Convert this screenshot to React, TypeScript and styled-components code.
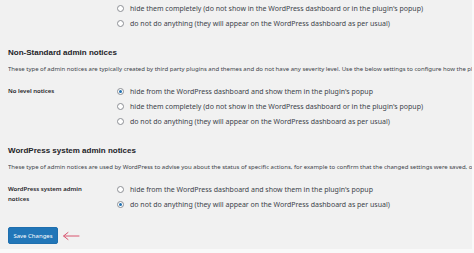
import React from "react";
import styled, { createGlobalStyle } from "styled-components";

const GlobalStyle = createGlobalStyle`
  html, body {
    margin: 0;
    padding: 0;
    background: #f9f9f9;
  }
  body {
    font-family: "Noto Sans", "Liberation Sans", Arial, sans-serif;
  }
`;

const Page = styled.div`
  width: 472px;
  height: 249px;
  overflow: hidden;
  background: #f1f1f1;
  padding: 0.5px 0 0 8px;
  box-sizing: border-box;
  color: #3c434a;
`;

const Heading = styled.h2`
  margin: 16.5px 0 0;
  font-family: "Liberation Sans", Arial, sans-serif;
  font-size: 8px;
  line-height: 12px;
  font-weight: 600;
  color: #1d2327;
  white-space: nowrap;
`;

const Description = styled.p`
  margin: 6px 0 0;
  font-size: 6px;
  line-height: 8px;
  white-space: nowrap;
  overflow: hidden;
  color: #3c434a;
`;

const Table = styled.div<{ $gap?: number }>`
  display: grid;
  grid-template-columns: 108.5px 1fr;
  margin-top: ${(p) => p.$gap ?? 0}px;
`;

const Label = styled.div`
  font-size: 6px;
  line-height: 10px;
  font-weight: 600;
  color: #1d2327;
  padding-top: 2.5px;
  width: 80px;
`;

const Options = styled.div`
  display: flex;
  flex-direction: column;
`;

const Option = styled.label`
  display: flex;
  align-items: center;
  height: 15px;
  font-size: 7px;
  color: #3c434a;
  white-space: nowrap;
`;

const Radio = styled.span<{ $checked?: boolean }>`
  width: 7px;
  height: 7px;
  box-sizing: border-box;
  border: 1px solid #8c8f94;
  border-radius: 50%;
  background: #fff;
  margin-right: 6.5px;
  display: flex;
  align-items: center;
  justify-content: center;
  flex-shrink: 0;
  &::after {
    content: "";
    display: ${(p) => (p.$checked ? "block" : "none")};
    width: 3px;
    height: 3px;
    border-radius: 50%;
    background: #2271b1;
  }
`;

const Actions = styled.div`
  display: flex;
  align-items: center;
  margin-top: 15.5px;
  gap: 4px;
`;

const SaveButton = styled.button`
  width: 50px;
  height: 17px;
  padding: 0;
  border: 1px solid #1f6fae;
  border-radius: 2px;
  background: #2176b8;
  color: #fff;
  font-family: "Noto Sans", "Liberation Sans", Arial, sans-serif;
  font-size: 6px;
  cursor: pointer;
`;

const Arrow = () => (
  <svg width="18" height="10" viewBox="0 0 18 10">
    <path
      d="M17 5 H2 M6 1.5 L1.5 5 L6 8.5"
      fill="none"
      stroke="#d9546f"
      strokeWidth="1"
      strokeLinecap="round"
      strokeLinejoin="round"
    />
  </svg>
);

type Choice = { text: string; checked?: boolean };

const RadioGroup = ({ choices }: { choices: Choice[] }) => (
  <Options>
    {choices.map((c) => (
      <Option key={c.text}>
        <Radio $checked={c.checked} />
        {c.text}
      </Option>
    ))}
  </Options>
);

const HIDE_POPUP = "hide from the WordPress dashboard and show them in the plugin's popup";
const HIDE_ALL = "hide them completely (do not show in the WordPress dashboard or in the plugin's popup)";
const DO_NOTHING = "do not do anything (they will appear on the WordPress dashboard as per usual)";

export default function App() {
  return (
    <>
      <GlobalStyle />
      <Page>
        <Table>
          <Label />
          <RadioGroup choices={[{ text: HIDE_ALL }, { text: DO_NOTHING }]} />
        </Table>

        <Heading>Non-Standard admin notices</Heading>
        <Description>
          These type of admin notices are typically created by third party plugins and themes and do not
          have any severity level. Use the below settings to configure how the pl
        </Description>
        <Table $gap={10.5}>
          <Label>No level notices</Label>
          <RadioGroup
            choices={[{ text: HIDE_POPUP, checked: true }, { text: HIDE_ALL }, { text: DO_NOTHING }]}
          />
        </Table>

        <Heading>WordPress system admin notices</Heading>
        <Description>
          These type of admin notices are used by WordPress to advise you about the status of specific
          actions, for example to confirm that the changed settings were saved, or
        </Description>
        <Table $gap={10.5}>
          <Label>WordPress system admin notices</Label>
          <RadioGroup choices={[{ text: HIDE_POPUP }, { text: DO_NOTHING, checked: true }]} />
        </Table>

        <Actions>
          <SaveButton>Save Changes</SaveButton>
          <Arrow />
        </Actions>
      </Page>
    </>
  );
}
